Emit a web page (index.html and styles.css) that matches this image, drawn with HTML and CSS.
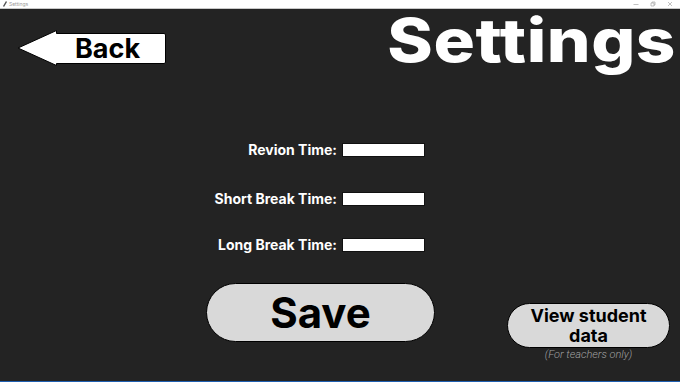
FILE: index.html
```html
<!DOCTYPE html>
<html lang="en">
<head>
<meta charset="utf-8">
<title>Settings</title>
<link rel="stylesheet" href="styles.css">
</head>
<body>
<div class="window">
  <div class="titlebar">
    <div class="tb-left">
      <svg class="tb-icon" width="4" height="6" viewBox="0 0 4 6"><path d="M3 0 L4 1 L1 6 L0 5 Z" fill="#555"/></svg>
      <span class="tb-title">Settings</span>
    </div>
    <div class="tb-controls">
      <svg class="tb-btn" width="6" height="6" viewBox="0 0 6 6"><path d="M0.5 3.5 H5.5" stroke="#999" stroke-width="0.6"/></svg>
      <svg class="tb-btn" width="6" height="6" viewBox="0 0 6 6"><path d="M1 2 H4 V5 H1 Z M2 2 V1 H5 V4 H4" fill="none" stroke="#999" stroke-width="0.6"/></svg>
      <svg class="tb-btn" width="6" height="6" viewBox="0 0 6 6"><path d="M1 1 L5 5 M5 1 L1 5" stroke="#999" stroke-width="0.6"/></svg>
    </div>
  </div>
  <div class="app">
    <header class="header">
      <button class="back">
        <svg class="back-shape" width="150" height="38" viewBox="0 0 150 38">
          <path d="M1 19 L39.5 1.5 L39.5 4.5 L147 4.5 Q148.5 4.5 148.5 6 L148.5 33 Q148.5 34.5 147 34.5 L39.5 34.5 L39.5 36.5 Z" fill="#ffffff" stroke="#000" stroke-width="1" stroke-linejoin="round"/>
        </svg>
        <span class="back-label">Back</span>
      </button>
      <h1 class="title">Settings</h1>
    </header>
    <section class="form">
      <label class="field-label">Revion Time:</label>
      <span class="field-input"></span>
      <label class="field-label">Short Break Time:</label>
      <span class="field-input"></span>
      <label class="field-label">Long Break Time:</label>
      <span class="field-input"></span>
    </section>
    <section class="actions">
      <button class="save">Save</button>
      <div class="student">
        <button class="view">View student<br>data</button>
        <span class="note">(For teachers only)</span>
      </div>
    </section>
  </div>
</div>
</body>
</html>
```
FILE: styles.css
```css
* { box-sizing: border-box; }
html, body { margin: 0; padding: 0; }
body {
  width: 680px;
  height: 382px;
  overflow: hidden;
  background: #232323;
  font-family: "Inter", "Roboto", sans-serif;
}
.window {
  width: 680px;
  height: 382px;
  display: flex;
  flex-direction: column;
  border-bottom: 1px solid #1f5fb0;
}
.titlebar {
  height: 9px;
  background: #ffffff;
  border-bottom: 1px solid #c8c8c8;
  display: flex;
  justify-content: space-between;
  align-items: center;
  padding: 0 7px 0 3px;
}
.tb-left { display: flex; align-items: center; gap: 2px; }
.tb-icon { display: block; }
.tb-title { font-size: 5px; color: #9a9a9a; line-height: 1; }
.tb-controls { display: flex; gap: 11px; align-items: center; }
.tb-btn { display: block; }
.app {
  flex: 1;
  display: flex;
  flex-direction: column;
}
.header {
  height: 120px;
  display: flex;
  justify-content: space-between;
  align-items: flex-start;
}
.back {
  position: relative;
  margin: 20px 0 0 17px;
  width: 150px;
  height: 38px;
  padding: 0 0 0 58px;
  border: 0;
  background: transparent;
  display: flex;
  align-items: center;
  cursor: pointer;
}
.back-shape { position: absolute; left: 0; top: 0; }
.back-label {
  position: relative;
  font-family: "Inter", sans-serif;
  font-weight: 700;
  font-size: 27px;
  color: #000;
  line-height: 1;
}
.title {
  margin: 1px 4px 0 0;
  font-family: "Inter", sans-serif;
  font-weight: 800;
  font-size: 60px;
  line-height: 60px;
  color: #ffffff;
  letter-spacing: 0.5px;
  transform: scaleX(1.15);
  transform-origin: right center;
}
.form {
  margin-top: 14px;
  display: grid;
  grid-template-columns: 337px 83px;
  grid-template-rows: 49px 46px 14px;
  column-gap: 5px;
  align-items: start;
}
.field-label {
  text-align: right;
  font-weight: 700;
  font-size: 14px;
  line-height: 14px;
  color: #ffffff;
}
.field-input {
  display: block;
  height: 14px;
  background: #ffffff;
  border: 1px solid #111;
}
.actions {
  margin-top: 31px;
  display: flex;
  align-items: flex-start;
  padding-left: 206px;
  gap: 72px;
}
.save {
  width: 229px;
  height: 59px;
  border-radius: 30px;
  border: 1px solid #000;
  background: #d9d9d9;
  font-family: "Inter", sans-serif;
  font-weight: 700;
  font-size: 42px;
  color: #000;
  padding: 0;
  line-height: 1;
}
.student {
  margin-top: 20px;
  width: 163px;
  display: flex;
  flex-direction: column;
  align-items: center;
}
.view {
  width: 163px;
  height: 45px;
  border-radius: 23px;
  border: 1px solid #000;
  background: #d9d9d9;
  font-family: "Inter", sans-serif;
  font-weight: 700;
  font-size: 18px;
  line-height: 20px;
  color: #000;
  padding: 0;
}
.note {
  margin-top: 1px;
  font-family: "Roboto", sans-serif;
  font-style: italic;
  font-weight: 300;
  font-size: 11px;
  line-height: 12px;
  color: #a0a0a0;
}
```
